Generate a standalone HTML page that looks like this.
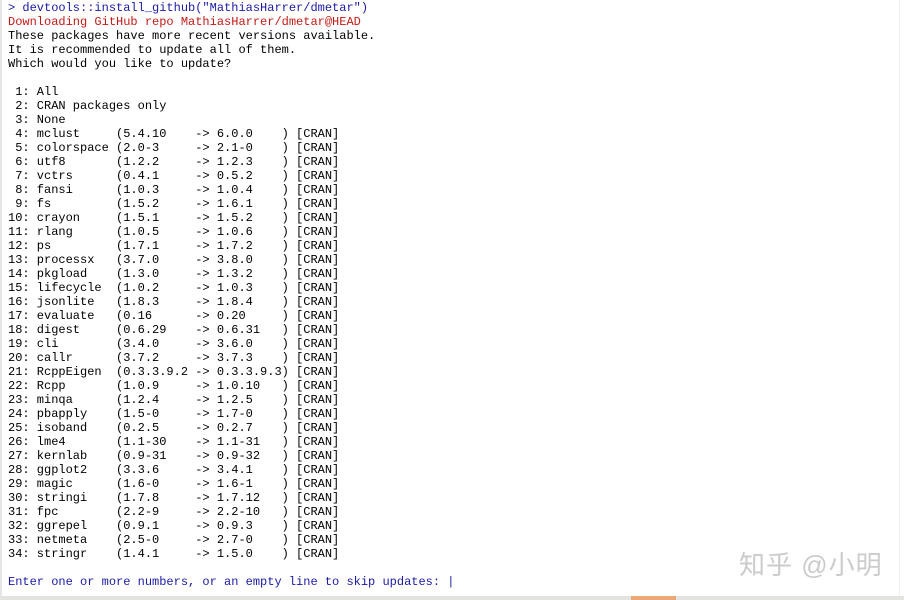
<!DOCTYPE html>
<html><head><style>
body{margin:0;width:904px;height:600px;background:#fff;position:relative;overflow:hidden}
pre{position:absolute;left:8px;top:1px;margin:0;font-family:"Liberation Mono",monospace;font-size:12px;line-height:14px;color:#000}
.b{color:#1a1aa6}.r{color:#c41a16}
.wm{position:absolute;left:739px;top:545px;font-family:"Liberation Sans","Noto Sans CJK SC",sans-serif;font-size:26px;color:#cbcbcb;letter-spacing:1px}
.lb{position:absolute;left:0;top:0;width:2px;height:600px;background:#e6e6e6}
.rb{position:absolute;left:899px;top:0;width:1px;height:596px;background:#eee}
.bot{position:absolute;left:0;top:596px;width:904px;height:4px;background:#e2e4e0}
.or{position:absolute;left:631px;top:596px;width:45px;height:4px;background:#e8a878}
</style></head><body>
<div class="lb"></div><div class="rb"></div>
<pre><span class="b">&gt; devtools::install_github("MathiasHarrer/dmetar")</span>
<span class="r">Downloading GitHub repo MathiasHarrer/dmetar@HEAD</span>
These packages have more recent versions available.
It is recommended to update all of them.
Which would you like to update?

 1: All                                  
 2: CRAN packages only                   
 3: None                                 
 4: mclust     (5.4.10    -&gt; 6.0.0    ) [CRAN]
 5: colorspace (2.0-3     -&gt; 2.1-0    ) [CRAN]
 6: utf8       (1.2.2     -&gt; 1.2.3    ) [CRAN]
 7: vctrs      (0.4.1     -&gt; 0.5.2    ) [CRAN]
 8: fansi      (1.0.3     -&gt; 1.0.4    ) [CRAN]
 9: fs         (1.5.2     -&gt; 1.6.1    ) [CRAN]
10: crayon     (1.5.1     -&gt; 1.5.2    ) [CRAN]
11: rlang      (1.0.5     -&gt; 1.0.6    ) [CRAN]
12: ps         (1.7.1     -&gt; 1.7.2    ) [CRAN]
13: processx   (3.7.0     -&gt; 3.8.0    ) [CRAN]
14: pkgload    (1.3.0     -&gt; 1.3.2    ) [CRAN]
15: lifecycle  (1.0.2     -&gt; 1.0.3    ) [CRAN]
16: jsonlite   (1.8.3     -&gt; 1.8.4    ) [CRAN]
17: evaluate   (0.16      -&gt; 0.20     ) [CRAN]
18: digest     (0.6.29    -&gt; 0.6.31   ) [CRAN]
19: cli        (3.4.0     -&gt; 3.6.0    ) [CRAN]
20: callr      (3.7.2     -&gt; 3.7.3    ) [CRAN]
21: RcppEigen  (0.3.3.9.2 -&gt; 0.3.3.9.3) [CRAN]
22: Rcpp       (1.0.9     -&gt; 1.0.10   ) [CRAN]
23: minqa      (1.2.4     -&gt; 1.2.5    ) [CRAN]
24: pbapply    (1.5-0     -&gt; 1.7-0    ) [CRAN]
25: isoband    (0.2.5     -&gt; 0.2.7    ) [CRAN]
26: lme4       (1.1-30    -&gt; 1.1-31   ) [CRAN]
27: kernlab    (0.9-31    -&gt; 0.9-32   ) [CRAN]
28: ggplot2    (3.3.6     -&gt; 3.4.1    ) [CRAN]
29: magic      (1.6-0     -&gt; 1.6-1    ) [CRAN]
30: stringi    (1.7.8     -&gt; 1.7.12   ) [CRAN]
31: fpc        (2.2-9     -&gt; 2.2-10   ) [CRAN]
32: ggrepel    (0.9.1     -&gt; 0.9.3    ) [CRAN]
33: netmeta    (2.5-0     -&gt; 2.7-0    ) [CRAN]
34: stringr    (1.4.1     -&gt; 1.5.0    ) [CRAN]

<span class="b">Enter one or more numbers, or an empty line to skip updates: |</span></pre>
<div class="wm">知乎 @小明</div>
<div class="bot"></div><div class="or"></div>
</body></html>
